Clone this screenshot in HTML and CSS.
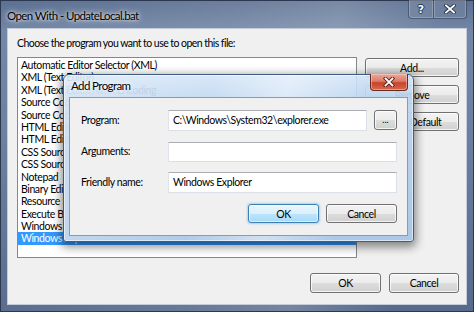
FILE: index.html
```html
<!DOCTYPE html>
<html>
<head>
<meta charset="utf-8">
<title>Open With</title>
<link rel="stylesheet" href="styles.css">
</head>
<body>
<div class="win">
  <div class="titlebar">
    <span class="title">Open With - UpdateLocal.bat</span>
    <div class="caption-btns">
      <span class="cap help">?</span>
      <span class="cap close">
        <svg width="12" height="10" viewBox="0 0 12 10"><path d="M2 1.5 L10 8.5 M10 1.5 L2 8.5" stroke="#2a3548" stroke-width="3.6" stroke-linecap="square"/><path d="M2 1.5 L10 8.5 M10 1.5 L2 8.5" stroke="#ffffff" stroke-width="1.8" stroke-linecap="square"/></svg>
      </span>
    </div>
  </div>
  <div class="client">
    <p class="prompt">Choose the program you want to use to open this file:</p>
    <div class="main">
      <ul class="list">
        <li>Automatic Editor Selector (XML)</li>
        <li>XML (Text Editor)</li>
        <li>XML (Text Editor) with Encoding</li>
        <li>Source Code (Text) Editor</li>
        <li>Source Code (Text) Editor With Encoding</li>
        <li>HTML Editor</li>
        <li>HTML Editor (Default)</li>
        <li>CSS Source Editor</li>
        <li>CSS Source Editor with Encoding</li>
        <li>Notepad</li>
        <li>Binary Editor</li>
        <li>Resource Editor</li>
        <li>Execute Batch File</li>
        <li>Windows Script Host</li>
        <li class="sel">Windows Explorer</li>
      </ul>
      <div class="side">
        <button class="btn">Add...</button>
        <button class="btn">Remove</button>
        <button class="btn">Set as Default</button>
      </div>
    </div>
    <div class="footer">
      <button class="btn wide71">OK</button>
      <button class="btn wide70">Cancel</button>
    </div>
  </div>
</div>

<div class="dlg">
  <div class="dlg-title">
    <span class="dlg-name">Add Program</span>
    <span class="dlg-close">
      <svg width="12" height="10" viewBox="0 0 12 10"><path d="M2.5 1.5 L9.5 8.5 M9.5 1.5 L2.5 8.5" stroke="#5a1f14" stroke-width="3.6" stroke-linecap="square"/><path d="M2.5 1.5 L9.5 8.5 M9.5 1.5 L2.5 8.5" stroke="#ffffff" stroke-width="1.8" stroke-linecap="square"/></svg>
    </span>
  </div>
  <div class="dlg-client">
    <div class="form">
      <span class="lbl">Program:</span>
      <div class="field">C:\Windows\System32\explorer.exe</div>
      <button class="btn dots">...</button>
      <span class="lbl">Arguments:</span>
      <div class="field span"></div>
      <span class="lbl">Friendly name:</span>
      <div class="field span">Windows Explorer</div>
    </div>
    <div class="dlg-actions">
      <button class="btn default">OK</button>
      <button class="btn">Cancel</button>
    </div>
  </div>
</div>
</body>
</html>
```
FILE: styles.css
```css
* { box-sizing: border-box; margin: 0; padding: 0; }
html, body { width: 474px; height: 312px; overflow: hidden; }
body {
  position: relative;
  font-family: "Lato", "Noto Sans", sans-serif;
  font-size: 10.5px;
  letter-spacing: -0.4px;
  color: #000;
  background: #3b4c68;
}

/* ---------- outer window ---------- */
.win {
  width: 474px;
  height: 312px;
  display: flex;
  flex-direction: column;
  padding: 0 6px 6px;
  border: 1px solid #2b3850;
  background:
    linear-gradient(100deg, rgba(255,255,255,0) 0%, rgba(255,255,255,0.10) 45%, rgba(255,255,255,0.18) 65%, rgba(255,255,255,0) 85%),
    linear-gradient(180deg, #5c7091 0%, #7388a7 10%, #6a7f9f 45%, #566a8c 100%);
}
.titlebar {
  height: 27px;
  flex: none;
  display: flex;
  justify-content: space-between;
  align-items: flex-start;
}
.title {
  margin-top: 8px;
  font-size: 11.5px;
  letter-spacing: -0.6px;
  line-height: 14px;
  color: #000;
  text-shadow: 0 0 6px rgba(255,255,255,0.9), 0 0 3px rgba(255,255,255,0.8);
}
.caption-btns {
  display: flex;
  margin-top: -1px;
}
.cap {
  height: 19px;
  display: flex;
  align-items: center;
  justify-content: center;
  border: 1px solid rgba(40,52,72,0.55);
  border-top: none;
  box-shadow: inset 0 0 0 1px rgba(255,255,255,0.22);
  background: linear-gradient(180deg, rgba(255,255,255,0.10), rgba(255,255,255,0.03));
}
.help {
  width: 25px;
  border-radius: 0 0 0 4px;
  border-right: none;
  font-family: "DejaVu Sans", sans-serif;
  font-weight: bold;
  font-size: 11px;
  letter-spacing: 0;
  color: #fff;
  text-shadow: 0 0 1px #1d2636, 1px 0 0 #2a3548, -1px 0 0 #2a3548, 0 1px 0 #2a3548, 0 -1px 0 #2a3548;
}
.close {
  width: 34px;
  border-radius: 0 0 4px 0;
}

.client {
  flex: 1;
  background: #f0f0f0;
  border: 1px solid #c3ccd8;
  padding: 8px 7px 0 9px;
  display: flex;
  flex-direction: column;
}
.prompt {
  line-height: 13px;
  height: 13px;
  letter-spacing: -0.55px;
}
.main {
  margin-top: 7px;
  display: flex;
  gap: 8px;
  align-items: flex-start;
}
.list {
  list-style: none;
  width: 340px;
  height: 201px;
  background: #fff;
  border: 1px solid #828790;
  padding: 1px 0;
  overflow: hidden;
}
.list li {
  height: 12.4px;
  line-height: 12.4px;
  padding-left: 3px;
  white-space: nowrap;
}
.list li.sel {
  background: #3399ff;
  color: #fff;
}
.side {
  width: 94px;
  display: flex;
  flex-direction: column;
  gap: 8px;
  margin-top: 1px;
}
.footer {
  margin-top: 15px;
  display: flex;
  justify-content: flex-end;
  gap: 8px;
}
.wide71 { width: 71px; }
.wide70 { width: 70px; }

/* ---------- buttons ---------- */
.btn {
  font: inherit;
  font-size: 10.5px;
  letter-spacing: -0.4px;
  color: #000;
  height: 20px;
  border: 1px solid #707070;
  border-radius: 3px;
  background: linear-gradient(180deg, #f3f3f3 0%, #ececec 50%, #dddddd 51%, #d0d0d0 100%);
  box-shadow: inset 0 0 0 1px rgba(255,255,255,0.75);
  cursor: default;
}
.side .btn { height: 19px; }

/* ---------- Add Program dialog ---------- */
.dlg {
  position: absolute;
  left: 63px;
  top: 74px;
  width: 351px;
  height: 168px;
  display: flex;
  flex-direction: column;
  padding: 0 5px 5px;
  border: 1px solid #3f5d84;
  border-radius: 6px 6px 3px 3px;
  background:
    linear-gradient(100deg, rgba(255,255,255,0.40) 0%, rgba(255,255,255,0.18) 40%, rgba(255,255,255,0.50) 60%, rgba(255,255,255,0.12) 80%),
    linear-gradient(180deg, rgba(200,222,245,0.86) 0%, rgba(180,208,238,0.92) 14%, #a9c7e8 60%, #9fc0e4 100%);
  box-shadow: 0 3px 10px 2px rgba(0,0,0,0.45), inset 0 0 0 1px rgba(255,255,255,0.55);
}
.dlg-title {
  height: 22px;
  flex: none;
  display: flex;
  justify-content: space-between;
  align-items: flex-start;
}
.dlg-name {
  margin-top: 4px;
  padding-left: 2px;
  font-size: 11.5px;
  letter-spacing: -0.6px;
  line-height: 14px;
  text-shadow: 0 0 6px rgba(255,255,255,0.95), 0 0 3px rgba(255,255,255,0.9);
}
.dlg-close {
  width: 38px;
  height: 17px;
  margin-top: -1px;
  display: flex;
  align-items: center;
  justify-content: center;
  border: 1px solid #6b2a1f;
  border-top: none;
  border-radius: 0 0 4px 4px;
  background: linear-gradient(180deg, #e9a99b 0%, #dd7b66 45%, #c7432a 55%, #d66a4f 100%);
  box-shadow: inset 0 0 0 1px rgba(255,220,210,0.45);
}
.dlg-client {
  flex: 1;
  background: #f0f0f0;
  border: 1px solid #7f9dc2;
  padding: 12px 10px 0 11px;
  display: flex;
  flex-direction: column;
}
.form {
  display: grid;
  grid-template-columns: 80px 199px 23px;
  grid-template-rows: 21px 20px 21px;
  column-gap: 7px;
  row-gap: 10.5px;
  align-items: center;
}
.lbl {
  line-height: 13px;
}
.field {
  height: 100%;
  background: #fff;
  border: 1px solid #dbdfe6;
  border-top-color: #abadb3;
  border-left-color: #e2e3ea;
  padding-left: 4px;
  line-height: 19px;
  white-space: nowrap;
  overflow: hidden;
}
.field.span { grid-column: 2 / 4; }
.dots {
  height: 20px;
  align-self: start;
  line-height: 10px;
  font-size: 9px;
  letter-spacing: 0;
}
.dlg-actions {
  margin-top: 11px;
  display: flex;
  justify-content: flex-end;
  gap: 7px;
}
.dlg-actions .btn { width: 71px; height: 19px; }
.btn.default {
  border-color: #3c7fb1;
  background: linear-gradient(180deg, #eaf6fd 0%, #d9f0fc 50%, #bee6fd 51%, #a7d9f5 100%);
  box-shadow: inset 0 0 0 1px rgba(255,255,255,0.6), 0 0 2px 1px rgba(90,170,230,0.45);
}
```
